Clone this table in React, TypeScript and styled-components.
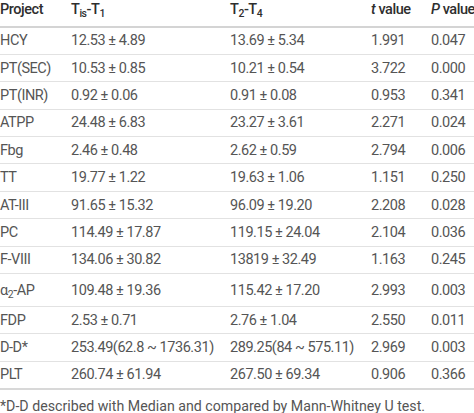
import React from 'react';
import styled, { createGlobalStyle } from 'styled-components';

const GlobalStyle = createGlobalStyle`
  html, body {
    margin: 0;
    padding: 0;
    background: #fff;
  }
  body {
    font-family: Roboto, "Liberation Sans", sans-serif;
  }
`;

const Wrap = styled.div`
  width: 474px;
  height: 413px;
  overflow: hidden;
  color: #555;
`;

const Table = styled.table`
  width: 474px;
  border-collapse: collapse;
  table-layout: fixed;
  font-size: 14.5px;
  letter-spacing: -0.45px;
`;

const Th = styled.th`
  height: 26px;
  padding: 0;
  text-align: left;
  vertical-align: top;
  line-height: 20px;
  font-weight: 500;
  color: #2e2e2e;
  white-space: nowrap;
  border-bottom: 2px solid #d4d4d4;
`;

const Tr = styled.tr<{ $tall?: boolean; $last?: boolean }>`
  height: ${({ $tall }) => ($tall ? '33px' : '27.4px')};
  border-bottom: ${({ $last }) => ($last ? '2px solid #d8d8d8' : '1px solid #e2e2e2')};
`;

const Td = styled.td`
  padding: 0;
  white-space: nowrap;
  vertical-align: middle;
`;

const Sub = styled.sub`
  font-size: 0.72em;
  line-height: 0;
  vertical-align: -0.3em;
`;

const I = styled.i`
  font-style: italic;
`;

const Note = styled.div`
  font-size: 14.2px;
  line-height: 20px;
  padding-top: 6px;
  white-space: nowrap;
`;

type Row = { name: React.ReactNode; a: string; b: string; t: string; p: string; tall?: boolean };

const rows: Row[] = [
  { name: 'HCY', a: '12.53 ± 4.89', b: '13.69 ± 5.34', t: '1.991', p: '0.047' },
  { name: 'PT(SEC)', a: '10.53 ± 0.85', b: '10.21 ± 0.54', t: '3.722', p: '0.000' },
  { name: 'PT(INR)', a: '0.92 ± 0.06', b: '0.91 ± 0.08', t: '0.953', p: '0.341' },
  { name: 'ATPP', a: '24.48 ± 6.83', b: '23.27 ± 3.61', t: '2.271', p: '0.024' },
  { name: 'Fbg', a: '2.46 ± 0.48', b: '2.62 ± 0.59', t: '2.794', p: '0.006' },
  { name: 'TT', a: '19.77 ± 1.22', b: '19.63 ± 1.06', t: '1.151', p: '0.250' },
  { name: 'AT-III', a: '91.65 ± 15.32', b: '96.09 ± 19.20', t: '2.208', p: '0.028' },
  { name: 'PC', a: '114.49 ± 17.87', b: '119.15 ± 24.04', t: '2.104', p: '0.036' },
  { name: 'F-VIII', a: '134.06 ± 30.82', b: '13819 ± 32.49', t: '1.163', p: '0.245' },
  {
    name: (
      <>
        α<Sub>2</Sub>-AP
      </>
    ),
    a: '109.48 ± 19.36',
    b: '115.42 ± 17.20',
    t: '2.993',
    p: '0.003',
    tall: true,
  },
  { name: 'FDP', a: '2.53 ± 0.71', b: '2.76 ± 1.04', t: '2.550', p: '0.011' },
  { name: 'D-D*', a: '253.49(62.8 ~ 1736.31)', b: '289.25(84 ~ 575.11)', t: '2.969', p: '0.003' },
  { name: 'PLT', a: '260.74 ± 61.94', b: '267.50 ± 69.34', t: '0.906', p: '0.366' },
];

export default function App() {
  return (
    <>
      <GlobalStyle />
      <Wrap>
        <Table>
          <colgroup>
            <col style={{ width: 71 }} />
            <col style={{ width: 159 }} />
            <col style={{ width: 141 }} />
            <col style={{ width: 60 }} />
            <col />
          </colgroup>
          <thead>
            <tr>
              <Th>Project</Th>
              <Th>
                T<Sub>is</Sub>-T<Sub>1</Sub>
              </Th>
              <Th>
                T<Sub>2</Sub>-T<Sub>4</Sub>
              </Th>
              <Th>
                <I>t</I> value
              </Th>
              <Th>
                <I>P</I> value
              </Th>
            </tr>
          </thead>
          <tbody>
            {rows.map((r, i) => (
              <Tr key={i} $tall={r.tall} $last={i === rows.length - 1}>
                <Td>{r.name}</Td>
                <Td>{r.a}</Td>
                <Td>{r.b}</Td>
                <Td>{r.t}</Td>
                <Td>{r.p}</Td>
              </Tr>
            ))}
          </tbody>
        </Table>
        <Note>*D-D described with Median and compared by Mann-Whitney U test.</Note>
      </Wrap>
    </>
  );
}
